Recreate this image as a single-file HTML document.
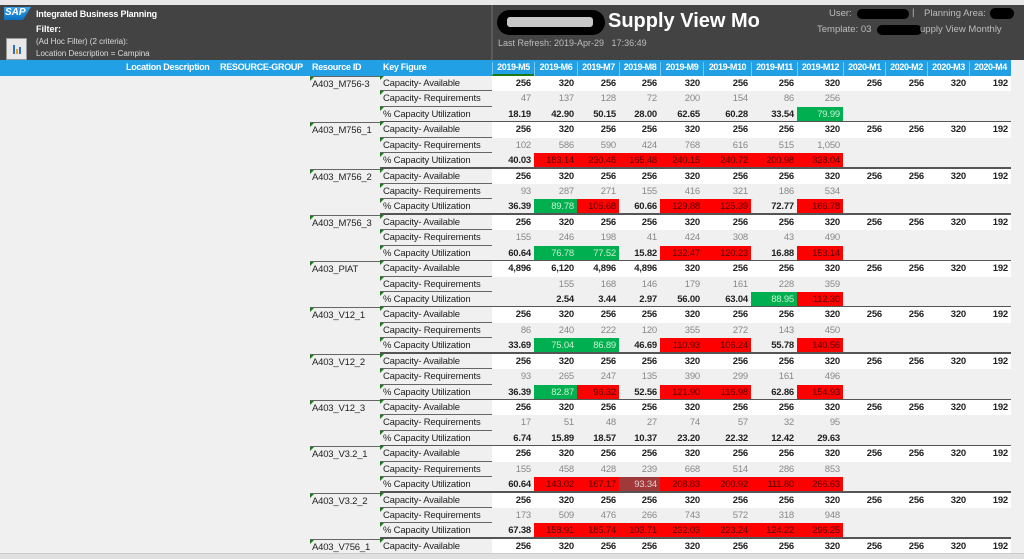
<!DOCTYPE html>
<html><head><meta charset="utf-8"><style>
*{margin:0;padding:0;box-sizing:border-box}
html,body{width:1024px;height:559px;overflow:hidden}
body{background:#f0f0f0;font-family:"Liberation Sans",Arial,sans-serif;position:relative}
.top{position:absolute;left:0;top:0;width:1024px;height:5px;background:#e8e8e8}
.hdr{position:absolute;left:0;top:5px;width:1024px;height:55px;background:#434343}
.vsep{position:absolute;left:491px;top:5px;width:2px;height:55px;background:#5a5a5a}
.t{position:absolute;color:#fff;white-space:nowrap}
.g{position:absolute;color:#bdbdbd;white-space:nowrap;font-size:9.5px}
.blue{position:absolute;left:0;top:60px;width:1011px;height:16px;background:#22a0e6}
.bh{position:absolute;top:62px;color:#fff;font-weight:bold;font-size:9px;white-space:nowrap;letter-spacing:-0.3px}
.mh{position:absolute;top:62px;color:#fff;font-weight:bold;font-size:9px;text-align:center;border-left:1px solid #7cc8f0;white-space:nowrap;letter-spacing:-0.4px;overflow:hidden;height:14px}
.grp{position:absolute;left:0;width:1011px;height:46.29px}
.row{position:relative;height:15.43px}
.rid{position:absolute;left:310px;top:0;width:70px;height:15.43px;border-top:1px solid #666;font-size:9.5px;padding:2px 0 0 2px;color:#222;white-space:nowrap;letter-spacing:-0.2px}
.kf{position:absolute;left:380px;width:112px;height:15.43px;font-size:9.5px;padding:2px 0 0 3px;color:#222;border-bottom:1px solid #666;white-space:nowrap;letter-spacing:-0.2px}
.tri{position:absolute;left:0;top:0;width:0;height:0;border-top:4px solid #1a7a1a;border-right:4px solid transparent}
.wb{position:absolute;left:492px;width:519px;height:15.43px;background:#fff}
.ub{position:absolute;left:380px;width:631px;bottom:0;height:1.5px;background:#555}
.c{position:absolute;top:0;height:15.43px;font-size:9.5px;text-align:right;padding:2px 3px 0 0;letter-spacing:-0.2px}
.a .c{font-weight:bold;color:#222}
.r .c{color:#888}
.u .c{color:#222;font-weight:bold}
.G{background:#00b050;color:#c8f0d0!important;font-weight:normal!important}
.R{background:#ff0000;color:#5a0000!important;font-weight:normal!important}
.D{background:#a03a3a;color:#e8caca!important;font-weight:normal!important}
.c0{left:492px;width:42px}.c1{left:534px;width:43px}.c2{left:577px;width:42px}.c3{left:619px;width:41px}.c4{left:660px;width:43px}.c5{left:703px;width:48px}.c6{left:751px;width:46px}.c7{left:797px;width:46px}.c8{left:843px;width:42px}.c9{left:885px;width:42px}.c10{left:927px;width:42px}.c11{left:969px;width:42px}
.sb{position:absolute;left:0;top:553px;width:1024px;height:6px;background:#e0e0e0;border-top:1px solid #ccc}
</style></head><body>
<div class="top"></div>
<div class="hdr"></div>
<div class="vsep"></div>
<div style="position:absolute;left:4px;top:7px;width:27px;height:13px;background:linear-gradient(#3aa6e8,#0a6fc2);clip-path:polygon(0 0,100% 0,70% 100%,0 100%)"></div>
<div class="t" style="left:5px;top:7px;font-size:10px;font-weight:bold;font-style:italic">SAP</div>
<div class="t" style="left:36px;top:9px;font-size:9px;font-weight:bold;letter-spacing:-0.2px">Integrated Business Planning</div>
<div class="t" style="left:36px;top:24px;font-size:9px;font-weight:bold">Filter:</div>
<div class="t" style="left:36px;top:37px;font-size:8px;color:#ddd">(Ad Hoc Filter) (2 criteria):</div>
<div class="t" style="left:36px;top:49px;font-size:8px;color:#ddd">Location Description = Campina</div>
<div style="position:absolute;left:6px;top:38px;width:21px;height:22px;background:#e8e8e8;border:1px solid #999"><div style="position:absolute;left:6px;top:6px;width:2px;height:9px;background:#3070c0"></div><div style="position:absolute;left:9px;top:10px;width:2px;height:5px;background:#e0a020"></div><div style="position:absolute;left:12px;top:8px;width:2px;height:7px;background:#3070c0"></div></div>
<div style="position:absolute;left:497px;top:10px;width:108px;height:25px;background:#000;border-radius:13px"><div style="position:absolute;left:10px;top:7px;width:86px;height:10px;background:#c8c8c8;border-radius:3px"></div></div>
<div class="t" style="left:608px;top:10px;font-size:20px;font-weight:bold">Supply View Mo</div>
<div class="g" style="left:498px;top:38px;font-size:9px">Last Refresh: 2019-Apr-29&nbsp;&nbsp;&nbsp;17:36:49</div>
<div class="g" style="left:829px;top:8px">User:</div>
<div style="position:absolute;left:857px;top:9px;width:52px;height:10px;background:#000;border-radius:5px"></div>
<div class="g" style="left:912px;top:7px">|</div>
<div class="g" style="left:924px;top:8px">Planning Area:</div>
<div style="position:absolute;left:990px;top:8px;width:24px;height:11px;background:#000;border-radius:6px"></div>
<div class="g" style="left:817px;top:24px">Template: 03</div>
<div style="position:absolute;left:877px;top:25px;width:45px;height:10px;background:#000;border-radius:5px"></div>
<div class="g" style="left:920px;top:24px">upply View Monthly</div>

<div class="blue"></div>
<div class="bh" style="left:126px">Location Description</div>
<div class="bh" style="left:220px">RESOURCE-GROUP</div>
<div class="bh" style="left:312px">Resource ID</div>
<div class="bh" style="left:383px">Key Figure</div>
<div class="mh c0" style="border-bottom:2px solid #1a7a1a">2019-M5</div><div class="mh c1">2019-M6</div><div class="mh c2">2019-M7</div><div class="mh c3">2019-M8</div><div class="mh c4">2019-M9</div><div class="mh c5">2019-M10</div><div class="mh c6">2019-M11</div><div class="mh c7">2019-M12</div><div class="mh c8">2020-M1</div><div class="mh c9">2020-M2</div><div class="mh c10">2020-M3</div><div class="mh c11">2020-M4</div>

<div class="grp" style="top:76px">
<div class="row a"><div class="rid"><i class="tri"></i>A403_M756-3</div><div class="kf"><i class="tri"></i>Capacity- Available</div><div class="wb"></div><div class="c c0">256</div><div class="c c1">320</div><div class="c c2">256</div><div class="c c3">256</div><div class="c c4">320</div><div class="c c5">256</div><div class="c c6">256</div><div class="c c7">320</div><div class="c c8">256</div><div class="c c9">256</div><div class="c c10">320</div><div class="c c11">192</div></div>
<div class="row r"><div class="kf"><i class="tri"></i>Capacity- Requirements</div><div class="c c0">47</div><div class="c c1">137</div><div class="c c2">128</div><div class="c c3">72</div><div class="c c4">200</div><div class="c c5">154</div><div class="c c6">86</div><div class="c c7">256</div></div>
<div class="row u"><div class="kf" style="border:none"><i class="tri"></i>% Capacity Utilization</div><div class="c c0">18.19</div><div class="c c1">42.90</div><div class="c c2">50.15</div><div class="c c3">28.00</div><div class="c c4">62.65</div><div class="c c5">60.28</div><div class="c c6">33.54</div><div class="c c7 G">79.99</div><div class="ub"></div></div>
</div>
<div class="grp" style="top:122.29px">
<div class="row a"><div class="rid"><i class="tri"></i>A403_M756_1</div><div class="kf"><i class="tri"></i>Capacity- Available</div><div class="wb"></div><div class="c c0">256</div><div class="c c1">320</div><div class="c c2">256</div><div class="c c3">256</div><div class="c c4">320</div><div class="c c5">256</div><div class="c c6">256</div><div class="c c7">320</div><div class="c c8">256</div><div class="c c9">256</div><div class="c c10">320</div><div class="c c11">192</div></div>
<div class="row r"><div class="kf"><i class="tri"></i>Capacity- Requirements</div><div class="c c0">102</div><div class="c c1">586</div><div class="c c2">590</div><div class="c c3">424</div><div class="c c4">768</div><div class="c c5">616</div><div class="c c6">515</div><div class="c c7">1,050</div></div>
<div class="row u"><div class="kf" style="border:none"><i class="tri"></i>% Capacity Utilization</div><div class="c c0">40.03</div><div class="c c1 R">183.14</div><div class="c c2 R">230.46</div><div class="c c3 R">165.48</div><div class="c c4 R">240.15</div><div class="c c5 R">240.72</div><div class="c c6 R">200.98</div><div class="c c7 R">328.04</div><div class="ub"></div></div>
</div>
<div class="grp" style="top:168.58px">
<div class="row a"><div class="rid"><i class="tri"></i>A403_M756_2</div><div class="kf"><i class="tri"></i>Capacity- Available</div><div class="wb"></div><div class="c c0">256</div><div class="c c1">320</div><div class="c c2">256</div><div class="c c3">256</div><div class="c c4">320</div><div class="c c5">256</div><div class="c c6">256</div><div class="c c7">320</div><div class="c c8">256</div><div class="c c9">256</div><div class="c c10">320</div><div class="c c11">192</div></div>
<div class="row r"><div class="kf"><i class="tri"></i>Capacity- Requirements</div><div class="c c0">93</div><div class="c c1">287</div><div class="c c2">271</div><div class="c c3">155</div><div class="c c4">416</div><div class="c c5">321</div><div class="c c6">186</div><div class="c c7">534</div></div>
<div class="row u"><div class="kf" style="border:none"><i class="tri"></i>% Capacity Utilization</div><div class="c c0">36.39</div><div class="c c1 G">89.78</div><div class="c c2 R">105.68</div><div class="c c3">60.66</div><div class="c c4 R">129.88</div><div class="c c5 R">125.39</div><div class="c c6">72.77</div><div class="c c7 R">166.78</div><div class="ub"></div></div>
</div>
<div class="grp" style="top:214.87px">
<div class="row a"><div class="rid"><i class="tri"></i>A403_M756_3</div><div class="kf"><i class="tri"></i>Capacity- Available</div><div class="wb"></div><div class="c c0">256</div><div class="c c1">320</div><div class="c c2">256</div><div class="c c3">256</div><div class="c c4">320</div><div class="c c5">256</div><div class="c c6">256</div><div class="c c7">320</div><div class="c c8">256</div><div class="c c9">256</div><div class="c c10">320</div><div class="c c11">192</div></div>
<div class="row r"><div class="kf"><i class="tri"></i>Capacity- Requirements</div><div class="c c0">155</div><div class="c c1">246</div><div class="c c2">198</div><div class="c c3">41</div><div class="c c4">424</div><div class="c c5">308</div><div class="c c6">43</div><div class="c c7">490</div></div>
<div class="row u"><div class="kf" style="border:none"><i class="tri"></i>% Capacity Utilization</div><div class="c c0">60.64</div><div class="c c1 G">76.78</div><div class="c c2 G">77.52</div><div class="c c3">15.82</div><div class="c c4 R">132.47</div><div class="c c5 R">120.23</div><div class="c c6">16.88</div><div class="c c7 R">153.14</div><div class="ub"></div></div>
</div>
<div class="grp" style="top:261.16px">
<div class="row a"><div class="rid"><i class="tri"></i>A403_PIAT</div><div class="kf"><i class="tri"></i>Capacity- Available</div><div class="wb"></div><div class="c c0">4,896</div><div class="c c1">6,120</div><div class="c c2">4,896</div><div class="c c3">4,896</div><div class="c c4">320</div><div class="c c5">256</div><div class="c c6">256</div><div class="c c7">320</div><div class="c c8">256</div><div class="c c9">256</div><div class="c c10">320</div><div class="c c11">192</div></div>
<div class="row r"><div class="kf"><i class="tri"></i>Capacity- Requirements</div><div class="c c1">155</div><div class="c c2">168</div><div class="c c3">146</div><div class="c c4">179</div><div class="c c5">161</div><div class="c c6">228</div><div class="c c7">359</div></div>
<div class="row u"><div class="kf" style="border:none"><i class="tri"></i>% Capacity Utilization</div><div class="c c1">2.54</div><div class="c c2">3.44</div><div class="c c3">2.97</div><div class="c c4">56.00</div><div class="c c5">63.04</div><div class="c c6 G">88.95</div><div class="c c7 R">112.30</div><div class="ub"></div></div>
</div>
<div class="grp" style="top:307.45px">
<div class="row a"><div class="rid"><i class="tri"></i>A403_V12_1</div><div class="kf"><i class="tri"></i>Capacity- Available</div><div class="wb"></div><div class="c c0">256</div><div class="c c1">320</div><div class="c c2">256</div><div class="c c3">256</div><div class="c c4">320</div><div class="c c5">256</div><div class="c c6">256</div><div class="c c7">320</div><div class="c c8">256</div><div class="c c9">256</div><div class="c c10">320</div><div class="c c11">192</div></div>
<div class="row r"><div class="kf"><i class="tri"></i>Capacity- Requirements</div><div class="c c0">86</div><div class="c c1">240</div><div class="c c2">222</div><div class="c c3">120</div><div class="c c4">355</div><div class="c c5">272</div><div class="c c6">143</div><div class="c c7">450</div></div>
<div class="row u"><div class="kf" style="border:none"><i class="tri"></i>% Capacity Utilization</div><div class="c c0">33.69</div><div class="c c1 G">75.04</div><div class="c c2 G">86.89</div><div class="c c3">46.69</div><div class="c c4 R">110.93</div><div class="c c5 R">106.24</div><div class="c c6">55.78</div><div class="c c7 R">140.56</div><div class="ub"></div></div>
</div>
<div class="grp" style="top:353.74px">
<div class="row a"><div class="rid"><i class="tri"></i>A403_V12_2</div><div class="kf"><i class="tri"></i>Capacity- Available</div><div class="wb"></div><div class="c c0">256</div><div class="c c1">320</div><div class="c c2">256</div><div class="c c3">256</div><div class="c c4">320</div><div class="c c5">256</div><div class="c c6">256</div><div class="c c7">320</div><div class="c c8">256</div><div class="c c9">256</div><div class="c c10">320</div><div class="c c11">192</div></div>
<div class="row r"><div class="kf"><i class="tri"></i>Capacity- Requirements</div><div class="c c0">93</div><div class="c c1">265</div><div class="c c2">247</div><div class="c c3">135</div><div class="c c4">390</div><div class="c c5">299</div><div class="c c6">161</div><div class="c c7">496</div></div>
<div class="row u"><div class="kf" style="border:none"><i class="tri"></i>% Capacity Utilization</div><div class="c c0">36.39</div><div class="c c1 G">82.87</div><div class="c c2 R">96.32</div><div class="c c3">52.56</div><div class="c c4 R">121.90</div><div class="c c5 R">116.98</div><div class="c c6">62.86</div><div class="c c7 R">154.93</div><div class="ub"></div></div>
</div>
<div class="grp" style="top:400.03px">
<div class="row a"><div class="rid"><i class="tri"></i>A403_V12_3</div><div class="kf"><i class="tri"></i>Capacity- Available</div><div class="wb"></div><div class="c c0">256</div><div class="c c1">320</div><div class="c c2">256</div><div class="c c3">256</div><div class="c c4">320</div><div class="c c5">256</div><div class="c c6">256</div><div class="c c7">320</div><div class="c c8">256</div><div class="c c9">256</div><div class="c c10">320</div><div class="c c11">192</div></div>
<div class="row r"><div class="kf"><i class="tri"></i>Capacity- Requirements</div><div class="c c0">17</div><div class="c c1">51</div><div class="c c2">48</div><div class="c c3">27</div><div class="c c4">74</div><div class="c c5">57</div><div class="c c6">32</div><div class="c c7">95</div></div>
<div class="row u"><div class="kf" style="border:none"><i class="tri"></i>% Capacity Utilization</div><div class="c c0">6.74</div><div class="c c1">15.89</div><div class="c c2">18.57</div><div class="c c3">10.37</div><div class="c c4">23.20</div><div class="c c5">22.32</div><div class="c c6">12.42</div><div class="c c7">29.63</div><div class="ub"></div></div>
</div>
<div class="grp" style="top:446.32px">
<div class="row a"><div class="rid"><i class="tri"></i>A403_V3.2_1</div><div class="kf"><i class="tri"></i>Capacity- Available</div><div class="wb"></div><div class="c c0">256</div><div class="c c1">320</div><div class="c c2">256</div><div class="c c3">256</div><div class="c c4">320</div><div class="c c5">256</div><div class="c c6">256</div><div class="c c7">320</div><div class="c c8">256</div><div class="c c9">256</div><div class="c c10">320</div><div class="c c11">192</div></div>
<div class="row r"><div class="kf"><i class="tri"></i>Capacity- Requirements</div><div class="c c0">155</div><div class="c c1">458</div><div class="c c2">428</div><div class="c c3">239</div><div class="c c4">668</div><div class="c c5">514</div><div class="c c6">286</div><div class="c c7">853</div></div>
<div class="row u"><div class="kf" style="border:none"><i class="tri"></i>% Capacity Utilization</div><div class="c c0">60.64</div><div class="c c1 R">143.02</div><div class="c c2 R">167.17</div><div class="c c3 D">93.34</div><div class="c c4 R">208.83</div><div class="c c5 R">200.92</div><div class="c c6 R">111.80</div><div class="c c7 R">266.63</div><div class="ub"></div></div>
</div>
<div class="grp" style="top:492.61px">
<div class="row a"><div class="rid"><i class="tri"></i>A403_V3.2_2</div><div class="kf"><i class="tri"></i>Capacity- Available</div><div class="wb"></div><div class="c c0">256</div><div class="c c1">320</div><div class="c c2">256</div><div class="c c3">256</div><div class="c c4">320</div><div class="c c5">256</div><div class="c c6">256</div><div class="c c7">320</div><div class="c c8">256</div><div class="c c9">256</div><div class="c c10">320</div><div class="c c11">192</div></div>
<div class="row r"><div class="kf"><i class="tri"></i>Capacity- Requirements</div><div class="c c0">173</div><div class="c c1">509</div><div class="c c2">476</div><div class="c c3">266</div><div class="c c4">743</div><div class="c c5">572</div><div class="c c6">318</div><div class="c c7">948</div></div>
<div class="row u"><div class="kf" style="border:none"><i class="tri"></i>% Capacity Utilization</div><div class="c c0">67.38</div><div class="c c1 R">158.91</div><div class="c c2 R">185.74</div><div class="c c3 R">103.71</div><div class="c c4 R">232.03</div><div class="c c5 R">223.24</div><div class="c c6 R">124.22</div><div class="c c7 R">296.25</div><div class="ub"></div></div>
</div>
<div class="grp" style="top:538.9px">
<div class="row a"><div class="rid"><i class="tri"></i>A403_V756_1</div><div class="kf"><i class="tri"></i>Capacity- Available</div><div class="wb"></div><div class="c c0">256</div><div class="c c1">320</div><div class="c c2">256</div><div class="c c3">256</div><div class="c c4">320</div><div class="c c5">256</div><div class="c c6">256</div><div class="c c7">320</div><div class="c c8">256</div><div class="c c9">256</div><div class="c c10">320</div><div class="c c11">192</div></div>
</div>
<div class="sb"></div>
</body></html>
